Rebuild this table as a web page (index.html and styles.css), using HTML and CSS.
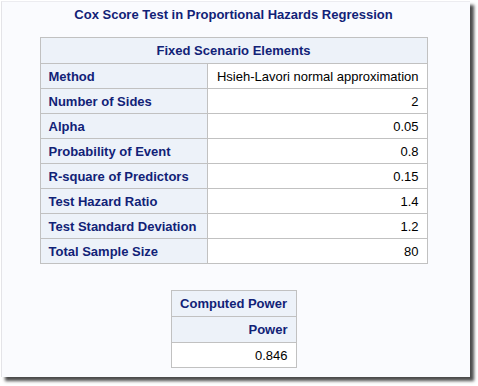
FILE: index.html
```html
<!DOCTYPE html>
<html>
<head>
<meta charset="utf-8">
<link rel="stylesheet" href="styles.css">
</head>
<body>
<div class="panel">
  <div class="title">Cox Score Test in Proportional Hazards Regression</div>
  <table class="grid scenario">
    <colgroup><col class="c1"><col class="c2"></colgroup>
    <thead>
      <tr><th colspan="2" class="head">Fixed Scenario Elements</th></tr>
    </thead>
    <tbody>
      <tr><th class="rowhead">Method</th><td class="val">Hsieh-Lavori normal approximation</td></tr>
      <tr><th class="rowhead">Number of Sides</th><td class="val">2</td></tr>
      <tr><th class="rowhead">Alpha</th><td class="val">0.05</td></tr>
      <tr><th class="rowhead">Probability of Event</th><td class="val">0.8</td></tr>
      <tr><th class="rowhead">R-square of Predictors</th><td class="val">0.15</td></tr>
      <tr><th class="rowhead">Test Hazard Ratio</th><td class="val">1.4</td></tr>
      <tr><th class="rowhead">Test Standard Deviation</th><td class="val">1.2</td></tr>
      <tr><th class="rowhead">Total Sample Size</th><td class="val">80</td></tr>
    </tbody>
  </table>
  <table class="grid power">
    <thead>
      <tr><th class="head">Computed Power</th></tr>
      <tr><th class="head right">Power</th></tr>
    </thead>
    <tbody>
      <tr><td class="val">0.846</td></tr>
    </tbody>
  </table>
</div>
</body>
</html>
```
FILE: styles.css
```css
html, body {
  margin: 0;
  padding: 0;
  background: #ffffff;
}

body {
  font-family: "Liberation Sans", Arial, sans-serif;
  font-size: 13px;
  min-height: 386px;
}

.panel {
  box-sizing: border-box;
  margin: 1px 0 0 1px;
  width: 469px;
  height: 376px;
  background: #fafbfe;
  border-left: 1px solid #e4e4e8;
  border-top: 1px solid #ececf0;
  box-shadow: 4px 4px 3px rgba(0, 0, 0, 0.7);
  padding: 5px 5px 0 0;
  display: flex;
  flex-direction: column;
  align-items: center;
}

.title {
  color: #112277;
  font-weight: bold;
  font-size: 13px;
  line-height: 16px;
  text-align: center;
}

.grid {
  border-collapse: collapse;
  border: 1px solid #c1c1c1;
  background: #ffffff;
}

.grid th,
.grid td {
  border: 1px solid #c1c1c1;
  height: 25px;
  padding: 0 8px;
  box-sizing: border-box;
  white-space: nowrap;
}

.scenario {
  margin-top: 14px;
  width: 387px;
  table-layout: fixed;
}

.scenario .c1 { width: 167px; }
.scenario .c2 { width: 220px; }

.head {
  background: #edf2f9;
  color: #112277;
  font-weight: bold;
  text-align: center;
}

.grid .head { height: 26px; }

.rowhead {
  background: #edf2f9;
  color: #112277;
  font-weight: bold;
  text-align: left;
}

.val {
  color: #000000;
  text-align: right;
}

.power {
  margin-top: 26px;
  width: 126px;
}

.right { text-align: right; }
```
